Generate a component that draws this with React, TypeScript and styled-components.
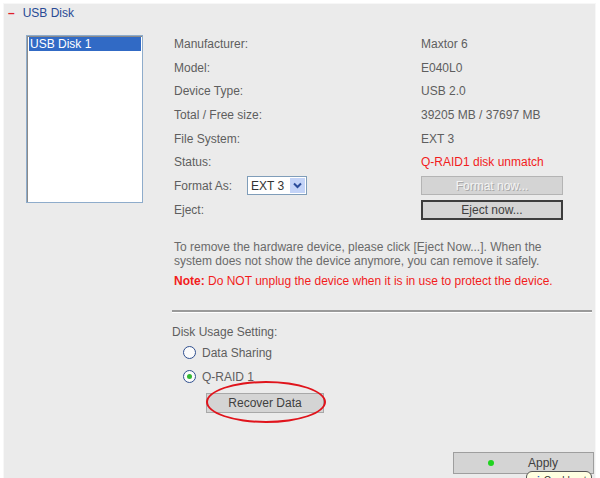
import styled, { createGlobalStyle } from "styled-components";

const GlobalStyle = createGlobalStyle`
  html, body {
    margin: 0;
    padding: 0;
    background: #ffffff;
    overflow: hidden;
  }
  body {
    font-family: "Liberation Sans", Arial, sans-serif;
    font-size: 12px;
    color: #5a5a5a;
  }
`;

const info: [string, string, boolean?][] = [
  ["Manufacturer:", "Maxtor 6"],
  ["Model:", "E040L0"],
  ["Device Type:", "USB 2.0"],
  ["Total / Free size:", "39205 MB / 37697 MB"],
  ["File System:", "EXT 3"],
  ["Status:", "Q-RAID1 disk unmatch", true],
];

const App = () => {
  return (
    <>
      <GlobalStyle />
      <Panel>
        <SectionTitle>
          <Dash>–</Dash>
          <span>USB Disk</span>
        </SectionTitle>

        <Main>
          <ListBox>
            <ListItem selected>USB Disk 1</ListItem>
          </ListBox>

          <Details>
            {info.map(([label, value, alert]) => (
              <Row key={label}>
                <Label>{label}</Label>
                <Value alert={alert}>{value}</Value>
              </Row>
            ))}
            <Row>
              <Label>
                Format As:
                <Select>
                  <span>EXT 3</span>
                  <SelectArrow>
                    <svg width="9" height="7" viewBox="0 0 9 7">
                      <path
                        d="M1 1.5 L4.5 5 L8 1.5"
                        fill="none"
                        stroke="#2b4c9a"
                        strokeWidth="2"
                      />
                    </svg>
                  </SelectArrow>
                </Select>
              </Label>
              <Button disabled>Format now...</Button>
            </Row>
            <Row>
              <Label>Eject:</Label>
              <Button focused>Eject now...</Button>
            </Row>

            <Paragraph>
              To remove the hardware device, please click [Eject Now...]. When the
              <br />
              system does not show the device anymore, you can remove it safely.
            </Paragraph>
            <Note>
              <b>Note:</b> Do NOT unplug the device when it is in use to protect the
              device.
            </Note>

            <Divider />

            <UsageTitle>Disk Usage Setting:</UsageTitle>
            <RadioGroup>
              <RadioRow>
                <Radio />
                Data Sharing
              </RadioRow>
              <RadioRow>
                <Radio checked />
                Q-RAID 1
              </RadioRow>
            </RadioGroup>
            <RecoverWrap>
              <RecoverButton>Recover Data</RecoverButton>
              <Ellipse />
            </RecoverWrap>
          </Details>
        </Main>

        <Footer>
          <ApplyButton>
            <GreenDot />
            <span>Apply</span>
          </ApplyButton>
          <Tip>
            <TipIcon>i</TipIcon> Could not
          </Tip>
        </Footer>
      </Panel>
    </>
  );
};

export default App;

const Panel = styled.div`
  position: relative;
  margin: 3px 4px 0 3px;
  height: 475px;
  background: #ebebeb;
  border-top: 1px solid #f7f7f7;
  border-left: 1px solid #f7f7f7;
  border-right: 1px solid #f7f7f7;
  box-sizing: border-box;
`;

const SectionTitle = styled.div`
  display: flex;
  align-items: center;
  gap: 8px;
  height: 18px;
  padding: 0 0 0 4px;
  color: #284a95;
  font-size: 12px;
`;

const Dash = styled.span`
  color: #e0202a;
  font-weight: bold;
`;

const Main = styled.div`
  display: flex;
  align-items: flex-start;
  padding: 10px 0 0 22px;
`;

const ListBox = styled.div`
  width: 112px;
  height: 165px;
  margin-top: 3px;
  background: #ffffff;
  border: 1px solid #8eaccb;
  box-shadow: inset 1px 1px 0 #8a8a8a;
  padding: 1px 1px 0 2px;
  flex-shrink: 0;
`;

const ListItem = styled.div<{ selected?: boolean }>`
  height: 14px;
  line-height: 14px;
  padding-left: 1px;
  background: ${(p) => (p.selected ? "#316ac5" : "transparent")};
  color: ${(p) => (p.selected ? "#ffffff" : "#000")};
`;

const Details = styled.div`
  display: flex;
  flex-direction: column;
  margin-left: 31px;
  width: 420px;
`;

const Row = styled.div`
  display: flex;
  align-items: center;
  height: 23.7px;
`;

const Label = styled.div`
  display: flex;
  align-items: center;
  width: 247px;
  color: #5e5e5e;
`;

const Value = styled.div<{ alert?: boolean }>`
  color: ${(p) => (p.alert ? "#f21c1c" : "#5e5e5e")};
`;

const Select = styled.div`
  display: flex;
  align-items: center;
  justify-content: space-between;
  margin-left: 15px;
  width: 54px;
  height: 17px;
  padding: 0 1px 0 3px;
  background: #ffffff;
  border: 1px solid #7f9db9;
  color: #333;
`;

const SelectArrow = styled.div`
  display: flex;
  align-items: center;
  justify-content: center;
  width: 15px;
  height: 15px;
  background: #c3d3f7;
`;

const Button = styled.div<{ disabled?: boolean; focused?: boolean }>`
  display: flex;
  align-items: center;
  justify-content: center;
  width: 142px;
  height: ${(p) => (p.focused ? "20px" : "19px")};
  box-sizing: border-box;
  background: #d4d4d4;
  border: ${(p) => (p.focused ? "2px solid #3c3c3c" : "1px solid #b4b4b4")};
  color: ${(p) => (p.disabled ? "#f4f4f4" : "#404040")};
  text-shadow: ${(p) => (p.disabled ? "1px 1px 0 #a8a8a8" : "none")};
`;

const Paragraph = styled.div`
  margin-top: 18px;
  line-height: 14px;
  color: #6a6a6a;
  white-space: nowrap;
`;

const Note = styled.div`
  margin-top: 6px;
  line-height: 14px;
  color: #f21c1c;
  white-space: nowrap;

  b {
    font-weight: bold;
  }
`;

const Divider = styled.div`
  margin: 22px 0 0 -2px;
  width: 420px;
  height: 2px;
  background: #9a9a9a;
  border-bottom: 1px solid #ffffff;
`;

const UsageTitle = styled.div`
  margin: 12px 0 0 -2px;
  line-height: 14px;
  color: #5e5e5e;
`;

const RadioGroup = styled.div`
  display: flex;
  flex-direction: column;
  margin: 2px 0 0 9px;
`;

const RadioRow = styled.div`
  display: flex;
  align-items: center;
  gap: 6px;
  height: 24px;
  color: #5e5e5e;
`;

const Radio = styled.span<{ checked?: boolean }>`
  position: relative;
  display: inline-block;
  width: 11px;
  height: 11px;
  border-radius: 50%;
  border: 1px solid #2f4f8f;
  background: #fbfbfb;

  &::after {
    content: "";
    display: ${(p) => (p.checked ? "block" : "none")};
    position: absolute;
    left: 3px;
    top: 3px;
    width: 5px;
    height: 5px;
    border-radius: 50%;
    background: #33b833;
  }
`;

const RecoverWrap = styled.div`
  position: relative;
  margin: 4px 0 0 32px;
  width: 118px;
`;

const RecoverButton = styled.div`
  display: flex;
  align-items: center;
  justify-content: center;
  width: 118px;
  height: 20px;
  box-sizing: border-box;
  background: #d4d4d4;
  border: 1px solid #a8a8a8;
  color: #404040;
`;

const Ellipse = styled.div`
  position: absolute;
  left: 0;
  top: -12px;
  width: 116px;
  height: 38px;
  border: 2px solid #e0141c;
  border-radius: 50%;
`;

const Footer = styled.div`
  position: relative;
  display: flex;
  justify-content: flex-end;
  margin-top: 39px;
  padding-right: 1px;
`;

const ApplyButton = styled.div`
  display: flex;
  align-items: center;
  width: 141px;
  height: 22px;
  box-sizing: border-box;
  background: #d4d4d4;
  border: 1px solid #9e9e9e;
  color: #404040;

  span {
    margin-left: 34px;
  }
`;

const GreenDot = styled.span`
  width: 6px;
  height: 6px;
  margin-left: 32px;
  border-radius: 50%;
  background: #1fd41f;
`;

const Tip = styled.div`
  position: absolute;
  left: 522px;
  top: 19px;
  width: 66px;
  height: 20px;
  box-sizing: border-box;
  display: flex;
  align-items: center;
  gap: 4px;
  padding-left: 10px;
  background: #ffffe1;
  border: 1px solid #555;
  border-radius: 6px;
  font-size: 10px;
  color: #333;
  white-space: nowrap;
  overflow: hidden;
`;

const TipIcon = styled.span`
  color: #2a5fc0;
  font-weight: bold;
`;
